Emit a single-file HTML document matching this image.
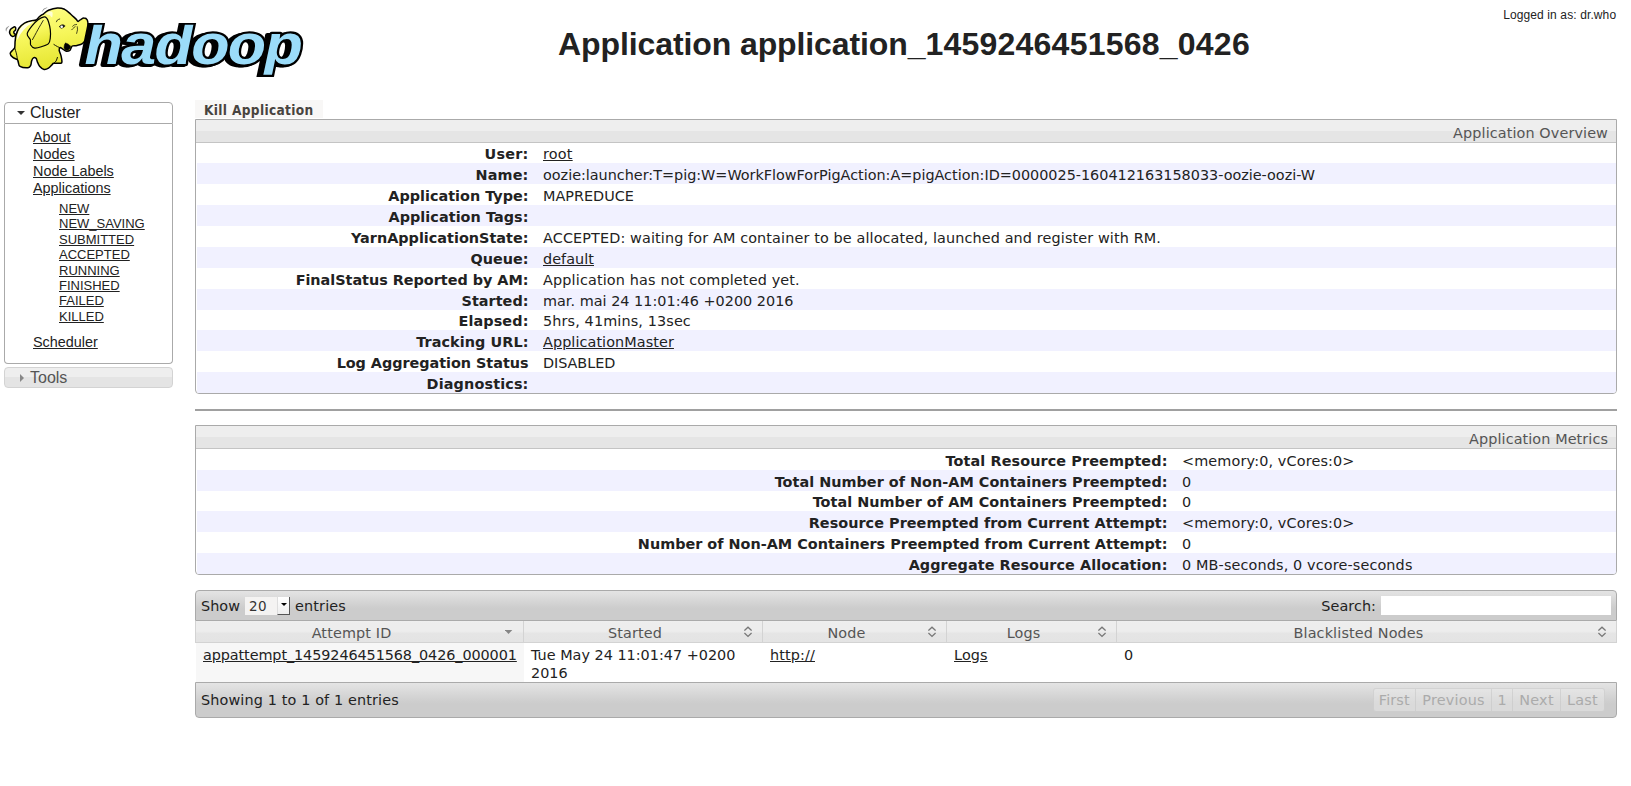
<!DOCTYPE html>
<html>
<head>
<meta charset="utf-8">
<title>Application application_1459246451568_0426</title>
<style>
* { margin: 0; padding: 0; border: 0; box-sizing: border-box; }
html, body { width: 1631px; height: 786px; background: #fff; overflow: hidden; }
body { font: 14.4px "DejaVu Sans", "Liberation Sans", sans-serif; color: #222; position: relative; }
a { color: #222; text-decoration: underline; }
.abs { position: absolute; }
#user { right: 14.8px; letter-spacing: 0.115px; top: 8px; font: 12px/14px "Liberation Sans", sans-serif; color: #222; }
#title { left: 195px; width: 1418px; top: 24px; text-align: center; font: bold 32px/40px "Liberation Sans", sans-serif; color: #222; white-space: nowrap; }
#logo { left: 0; top: 0; }

/* nav */
#nav { left: 4px; top: 102px; width: 169px; font-family: "Liberation Sans", sans-serif; }
#nav h3 { font-weight: normal; font-size: 16px; line-height: 18px; height: 22px; border: 1px solid #aaa; padding: 1px 0 0 25px; position: relative; color: #212121; background: #fff; }
#nav h3.open { border-radius: 4px 4px 0 0; }
#nav h3.closed { border-radius: 4px; background: linear-gradient(#eeeeee 0, #eeeeee 50%, #e4e4e4 50%, #e4e4e4 100%); border-color: #d3d3d3; color: #555; margin-top: 3px; height: 21px; padding-top: 1px; }
#nav .panel { border: 1px solid #aaa; border-top: 0; border-radius: 0 0 4px 4px; height: 240px; padding: 5px 0 0 28px; background: #fff; }
#nav .panel a { display: block; font-size: 14.4px; line-height: 17px; }
#nav .panel .sub { padding: 4px 0 10px 26px; }
#nav .panel .sub a { font-size: 13px; line-height: 15.4px; }
.tri-d { position: absolute; left: 12px; top: 8px; width: 0; height: 0; border-left: 4px solid transparent; border-right: 4px solid transparent; border-top: 4px solid #333; }
.tri-r { position: absolute; left: 15px; top: 6px; width: 0; height: 0; border-top: 4px solid transparent; border-bottom: 4px solid transparent; border-left: 4px solid #888; }

/* content */
#kill { left: 195px; top: 100px; width: 128px; height: 18px; background: #f8f7f6; font: bold 13.6px/20px "DejaVu Sans Condensed", "DejaVu Sans", sans-serif; color: #48443f; padding-left: 9px; letter-spacing: 0.33px; white-space: nowrap; }
.box { border: 1px solid #aaa; border-radius: 0 0 4px 4px; background: #fff; padding: 0 0 0 1px; overflow: hidden; }
.box .hd { height: 23px; margin: 0 0 0 -1px; border-bottom: 1px solid #c4c4c4; background: linear-gradient(#eeeeee 0, #eeeeee 50%, #e5e5e5 50%, #e5e5e5 100%); text-align: right; padding: 4px 8px 0 0; line-height: 18px; color: #555; }
.info .r { height: 21px; display: flex; white-space: nowrap; line-height: 17px; color: #222; }
.info .r.even { background: #f1f1ff; }
.info .r b { display: block; text-align: right; padding: 4px 6.5px 0 0; font-weight: bold; flex: none; }
.info .r span { display: block; padding: 4px 0 0 8px; }
#ov { left: 195px; top: 119px; width: 1422px; height: 275px; }
#ov b { width: 338px; }
#ov .r:nth-child(1), #ov .r:nth-child(9), #met .r:nth-child(3) { height: 20px; }
#ov .r:nth-child(1) > *, #ov .r:nth-child(9) > *, #met .r:nth-child(3) > * { padding-top: 3px; }
#hr { left: 195px; top: 409px; width: 1422px; height: 2px; background: #a0a0a0; }
#met { left: 195px; top: 425px; width: 1422px; height: 150px; }
#met b { width: 977px; }

/* datatable */
.bar { left: 195px; width: 1422px; border: 1px solid #aaa; background: linear-gradient(#e4e4e4 0, #dadada 25%, #cfcfcf 52%, #ccc 62%, #ccc 100%); color: #222; }
#bar1 { top: 590px; height: 31px; border-radius: 4px 4px 0 0; }
#bar2 { top: 682px; height: 36px; border-radius: 0 0 4px 4px; }
#thead { left: 195px; top: 621px; width: 1422px; height: 22px; border: 1px solid #d3d3d3; border-top: 0; background: linear-gradient(#efefef 0, #ededed 8%, #ededed 48%, #e5e5e5 60%, #e4e4e4 100%); color: #555; }
#thead div { position: absolute; top: 0; height: 21px; border-right: 1px solid #d3d3d3; text-align: center; line-height: 24px; padding-right: 16px; }
.sorticon { position: absolute; right: 10.5px; top: 5px; width: 8px; height: 12px; }
#sel { left: 49px; top: 6px; width: 45px; height: 18px; background: #f4f3f2; }
#sel span { position: absolute; left: 4px; top: 1px; font-size: 13.5px; line-height: 17px; color: #333; }
#sel i { position: absolute; right: 0; top: 0; width: 13px; height: 18px; background: linear-gradient(#fff, #eee); border-right: 1px solid #555; border-bottom: 1px solid #555; border-left: 1px solid #ddd; }
#sel i:after { content: ""; position: absolute; left: 3px; top: 6px; border-left: 3px solid transparent; border-right: 3px solid transparent; border-top: 3.5px solid #000; }
#search { left: 1185px; top: 5px; width: 230px; height: 19px; background: #fff; }
#row { left: 195px; top: 643px; width: 1422px; height: 39px; line-height: 18px; }
#pag { right: 11px; top: 5px; height: 24px; border: 1px solid rgba(190,190,190,.45); border-radius: 3px; background: rgba(240,240,240,.4); color: #ababab; white-space: nowrap; font-size: 0; }
#pag span { display: inline-block; height: 22px; line-height: 23px; font-size: 14.4px; text-align: center; border-right: 1px solid rgba(190,190,190,.45); }
</style>
</head>
<body>
<div id="logo" class="abs"><svg width="310" height="85" viewBox="0 0 310 85">
<defs><linearGradient id="yg" x1="0" y1="0" x2="0.25" y2="1"><stop offset="0" stop-color="#ffff8c"/><stop offset="0.55" stop-color="#f6f65a"/><stop offset="1" stop-color="#e6e632"/></linearGradient></defs>
<g stroke="#000" stroke-width="1.5" stroke-linejoin="round" stroke-linecap="round" fill="url(#yg)">
<path d="M16.0 34.7C15.7 35.2 13.5 36.7 12.5 36.5C11.4 36.3 10.2 34.5 9.8 33.4C9.4 32.3 9.7 30.8 10.2 29.8C10.8 28.9 12.1 28.1 12.9 27.6C13.7 27.1 14.7 26.6 15.1 27.0C15.6 27.3 15.8 29.1 15.6 29.8C15.4 30.6 14.0 30.9 13.8 31.6C13.6 32.3 14.1 33.3 14.5 33.8C14.9 34.4 16.4 34.3 16.0 34.7Z"/>
<path d="M43.6 13.8C45.1 12.8 46.2 11.2 48.5 10.2C50.8 9.3 54.8 8.2 57.4 8.0C60.1 7.9 62.3 8.3 64.6 9.3C66.8 10.4 68.9 12.6 70.8 14.2C72.7 15.9 74.9 18.0 76.1 19.1C77.3 20.3 77.3 21.3 78.1 21.4C78.8 21.4 79.6 20.1 80.6 19.6C81.6 19.0 83.0 18.0 84.1 18.1C85.3 18.1 86.6 18.7 87.3 20.0C87.9 21.4 88.1 24.0 88.1 26.3C88.2 28.5 88.1 31.2 87.7 33.4C87.3 35.6 86.8 37.9 85.9 39.6C85.0 41.3 83.8 42.7 82.4 43.6C80.9 44.6 78.7 45.0 77.0 45.4C75.4 45.8 73.5 45.5 72.6 45.9C71.6 46.2 71.7 46.9 71.2 47.6C70.8 48.4 70.7 49.7 69.9 50.3C69.1 50.9 67.4 51.3 66.3 51.2C65.2 51.0 64.3 50.0 63.2 49.4C62.2 48.8 60.8 47.5 60.1 47.6C59.4 47.8 59.1 49.0 59.2 50.3C59.4 51.6 60.5 53.9 61.0 55.6C61.4 57.4 61.9 59.7 61.9 61.0C61.9 62.3 62.3 62.8 61.0 63.2C59.7 63.6 55.4 63.0 53.9 63.2C52.4 63.4 53.0 63.7 52.1 64.6C51.2 65.4 49.9 67.3 48.5 68.1C47.2 68.9 45.6 69.7 44.1 69.4C42.6 69.2 40.7 67.6 39.6 66.3C38.5 65.1 38.0 63.2 37.4 61.9C36.8 60.5 36.7 59.0 36.1 58.3C35.4 57.7 34.1 57.4 33.4 57.9C32.6 58.3 32.0 59.7 31.6 61.0C31.2 62.3 31.3 64.3 30.7 65.4C30.1 66.6 29.8 67.5 28.0 67.7C26.3 67.8 21.7 67.3 20.0 66.3C18.4 65.4 18.7 63.0 18.2 61.9C17.8 60.8 18.2 60.4 17.4 59.7C16.5 58.9 14.1 58.5 12.9 57.4C11.7 56.4 10.2 54.7 10.2 53.4C10.2 52.2 12.2 50.8 12.9 49.9C13.6 48.9 14.3 49.0 14.7 47.6C15.1 46.2 14.9 43.5 15.1 41.4C15.4 39.3 15.4 37.4 16.0 35.2C16.7 32.9 17.7 30.0 19.1 28.0C20.5 26.0 22.6 24.3 24.5 23.1C26.4 22.0 28.8 21.4 30.7 20.9C32.6 20.4 34.6 20.8 36.1 20.0C37.5 19.3 38.4 17.5 39.6 16.5C40.9 15.4 42.1 14.8 43.6 13.8Z"/>
<path d="M44.1 16.9C42.6 17.2 39.9 18.5 37.8 20.0C35.8 21.6 33.4 24.0 31.6 26.3C29.8 28.6 27.4 31.6 27.2 33.8C26.9 36.1 29.7 37.8 30.3 39.6C30.9 41.5 30.0 43.6 30.7 45.0C31.5 46.4 32.9 47.8 34.7 48.1C36.5 48.4 39.1 47.5 41.4 46.7C43.7 46.0 47.0 45.1 48.5 43.6C50.0 42.1 50.0 40.1 50.3 37.8C50.6 35.5 50.6 32.5 50.3 29.8C50.0 27.2 49.1 23.7 48.5 21.8C47.9 19.9 47.5 19.1 46.7 18.2C46.0 17.4 45.6 16.6 44.1 16.9Z" stroke-width="1.2"/>
<path d="M65.4 43.2C66.5 42.8 69.7 44.9 70.3 45.9C71.0 46.8 70.1 48.2 69.4 49.0C68.8 49.7 67.2 50.5 66.3 50.3C65.4 50.2 64.3 49.3 64.1 48.1C64.0 46.9 64.4 43.6 65.4 43.2Z" fill="#000" stroke-width="0.6"/>
<path d="M59.7 26.3C59.9 25.7 61.4 24.7 62.3 24.7C63.2 24.6 64.8 25.3 65.0 25.8C65.1 26.3 63.9 27.2 63.2 27.6C62.5 28.0 61.6 28.4 61.0 28.2C60.4 28.0 59.4 26.9 59.7 26.3Z" fill="#1a1a1a" stroke-width="0.5"/>
<circle cx="61.7" cy="26.7" r="1.3" fill="#fff" stroke="none"/>
<path d="M53.9 44.5C54.5 44.9 56.4 46.0 57.4 46.6C58.5 47.1 59.8 47.6 60.3 47.8" fill="none" stroke-width="0.9"/>
<path d="M57.4 57.4C57.2 58.0 56.7 60.0 56.1 61.0C55.5 62.0 54.2 62.8 53.9 63.2" fill="none" stroke-width="0.9"/>
<path d="M14.7 47.6C15.0 48.7 16.0 51.9 16.5 53.9C16.9 55.9 17.4 58.7 17.5 59.7" fill="none" stroke-width="0.9"/>
<path d="M72.6 26.3C72.9 26.0 73.7 25.2 74.3 24.9C75.0 24.6 76.2 24.6 76.6 24.5" fill="none" stroke-width="0.7"/>
<path d="M71.7 29.8C72.0 29.5 73.3 28.1 73.9 27.6C74.5 27.1 75.0 26.9 75.2 26.7" fill="none" stroke-width="0.7"/>
<path d="M76.6 33.4C76.7 32.8 77.4 30.9 77.5 29.8C77.6 28.7 77.2 27.2 77.2 26.7" fill="none" stroke-width="0.7"/>
<path d="M56.5 21.8C56.7 21.5 56.9 20.5 57.4 20.0C57.9 19.6 59.3 19.1 59.7 19.0" fill="none" stroke-width="0.7"/>
<path d="M32.5 39.6C33.4 38.0 36.1 33.0 37.8 29.8C39.6 26.6 42.3 22.0 43.2 20.5" fill="none" stroke-width="0.8"/>
</g>
<path d="M17.4 39.6C16.9 39.5 17.5 34.6 18.2 32.5C19.0 30.3 20.3 28.3 21.8 26.7C23.3 25.1 25.2 24.0 27.2 23.1C29.1 22.3 33.5 21.1 33.4 21.8C33.2 22.5 28.3 25.2 26.3 27.2C24.2 29.1 22.4 31.3 20.9 33.4C19.4 35.5 17.8 39.8 17.4 39.6Z" fill="#fff" opacity=".85"/>
<path d="M45.9 13.8C46.0 13.2 49.2 11.8 50.3 11.6C51.4 11.3 52.2 11.5 52.5 12.5C52.8 13.4 52.6 16.9 52.1 17.4C51.6 17.8 50.5 15.7 49.4 15.1C48.4 14.5 45.7 14.4 45.9 13.8Z" fill="#fff" opacity=".7"/>
<path d="M41.8 12.0C41.8 11.9 43.1 9.2 44.1 8.5C45.0 7.7 47.6 7.3 47.6 7.4C47.7 7.5 45.5 8.4 44.5 9.2C43.6 9.9 41.9 12.1 41.8 12.0Z" fill="#888" stroke="none"/>
<path d="M6.2 31.6C6.0 31.5 5.3 29.5 5.8 28.5C6.3 27.5 9.1 25.7 9.3 25.8C9.6 25.9 7.6 28.0 7.1 28.9C6.6 29.9 6.4 31.7 6.2 31.6Z" fill="#999" stroke="none"/>
<defs><clipPath id="ck"><rect x="-20" y="-41.3" width="260" height="54"/></clipPath><clipPath id="cb"><rect x="-20" y="-39.5" width="260" height="50"/></clipPath></defs>
<g transform="translate(84.5,64.2) scale(1.082,1)" font-family="Liberation Sans, sans-serif" font-weight="bold" font-style="italic" font-size="58" letter-spacing="-1.5">
<g clip-path="url(#ck)">
<text x="-4.2" y="0.8" fill="#000" stroke="#000" stroke-width="4" stroke-linejoin="round">hadoop</text>
<text x="-2" y="0.4" fill="#000" stroke="#000" stroke-width="4" stroke-linejoin="round">hadoop</text>
<text x="0" y="0" fill="#000" stroke="#000" stroke-width="4.4" stroke-linejoin="round">hadoop</text>
</g>
<text clip-path="url(#cb)" x="0" y="0" fill="#9bdcf9">hadoop</text>
</g>
</svg></div>
<div id="user" class="abs">Logged in as: dr.who</div>
<div id="title" class="abs"><span style="letter-spacing:-0.104px">Application application_</span><span style="letter-spacing:0.23px">1459246451568_0426</span></div>

<div id="nav" class="abs">
  <h3 class="open"><span class="tri-d"></span>Cluster</h3>
  <div class="panel">
    <a>About</a>
    <a>Nodes</a>
    <a>Node Labels</a>
    <a>Applications</a>
    <div class="sub">
      <a>NEW</a>
      <a>NEW_SAVING</a>
      <a>SUBMITTED</a>
      <a>ACCEPTED</a>
      <a>RUNNING</a>
      <a>FINISHED</a>
      <a>FAILED</a>
      <a>KILLED</a>
    </div>
    <a>Scheduler</a>
  </div>
  <h3 class="closed"><span class="tri-r"></span>Tools</h3>
</div>

<div id="kill" class="abs">Kill Application</div>

<div id="ov" class="abs box">
  <div class="hd" style="letter-spacing:0.108px">Application Overview</div>
  <div class="info">
    <div class="r"><b style="letter-spacing:0.222px">User:</b><span><a style="letter-spacing:0.203px">root</a></span></div>
    <div class="r even"><b style="letter-spacing:0.140px">Name:</b><span style="letter-spacing:-0.008px">oozie:launcher:T=pig:W=WorkFlowForPigAction:A=pigAction:ID=0000025-160412163158033-oozie-oozi-W</span></div>
    <div class="r"><b style="letter-spacing:0.006px">Application Type:</b><span style="letter-spacing:0.017px">MAPREDUCE</span></div>
    <div class="r even"><b style="letter-spacing:0.056px">Application Tags:</b><span></span></div>
    <div class="r"><b style="letter-spacing:0.013px">YarnApplicationState:</b><span style="letter-spacing:0.122px">ACCEPTED: waiting for AM container to be allocated, launched and register with RM.</span></div>
    <div class="r even"><b style="letter-spacing:-0.006px">Queue:</b><span><a style="letter-spacing:0.048px">default</a></span></div>
    <div class="r"><b style="letter-spacing:-0.016px">FinalStatus Reported by AM:</b><span style="letter-spacing:0.153px">Application has not completed yet.</span></div>
    <div class="r even"><b style="letter-spacing:0.026px">Started:</b><span style="letter-spacing:0.018px">mar. mai 24 11:01:46 +0200 2016</span></div>
    <div class="r"><b style="letter-spacing:0.100px">Elapsed:</b><span style="letter-spacing:0.126px">5hrs, 41mins, 13sec</span></div>
    <div class="r even"><b style="letter-spacing:0.079px">Tracking URL:</b><span><a style="letter-spacing:0.080px">ApplicationMaster</a></span></div>
    <div class="r"><b style="letter-spacing:-0.032px">Log Aggregation Status</b><span style="letter-spacing:-0.052px">DISABLED</span></div>
    <div class="r even"><b style="letter-spacing:0.140px">Diagnostics:</b><span></span></div>
  </div>
</div>

<div id="hr" class="abs"></div>

<div id="met" class="abs box">
  <div class="hd" style="letter-spacing:0.089px">Application Metrics</div>
  <div class="info">
    <div class="r"><b style="letter-spacing:0.101px">Total Resource Preempted:</b><span style="letter-spacing:0.143px">&lt;memory:0, vCores:0&gt;</span></div>
    <div class="r even"><b style="letter-spacing:0.028px">Total Number of Non-AM Containers Preempted:</b><span style="letter-spacing:-0.162px">0</span></div>
    <div class="r"><b style="letter-spacing:0.035px">Total Number of AM Containers Preempted:</b><span style="letter-spacing:-0.162px">0</span></div>
    <div class="r even"><b style="letter-spacing:0.042px">Resource Preempted from Current Attempt:</b><span style="letter-spacing:0.143px">&lt;memory:0, vCores:0&gt;</span></div>
    <div class="r"><b style="letter-spacing:0.007px">Number of Non-AM Containers Preempted from Current Attempt:</b><span style="letter-spacing:-0.162px">0</span></div>
    <div class="r even"><b style="letter-spacing:0.060px">Aggregate Resource Allocation:</b><span style="letter-spacing:0.135px">0 MB-seconds, 0 vcore-seconds</span></div>
  </div>
</div>

<div id="bar1" class="abs bar">
  <span class="abs" style="letter-spacing:0.036px;left:5px;top:6px;line-height:18px">Show</span>
  <div id="sel" class="abs"><span style="letter-spacing:0.411px">20</span><i></i></div>
  <span class="abs" style="letter-spacing:0.155px;left:99px;top:6px;line-height:18px">entries</span>
  <span class="abs" style="letter-spacing:0.051px;right:240px;top:6px;line-height:18px">Search:</span>
  <div id="search" class="abs"></div>
</div>
<div id="thead" class="abs">
  <div style="letter-spacing:0.127px;left:0;width:328px">Attempt ID<svg class="sorticon" viewBox="0 0 8 12"><path d="M-0.3 4h7.6l-3.8 4z" fill="#858585"/></svg></div>
  <div style="letter-spacing:0.118px;left:328px;width:239px">Started<svg class="sorticon" viewBox="0 0 8 12"><path d="M0.4 4.6l3.6-3.4 3.6 3.4M0.4 7l3.6 3.4 3.6-3.4" fill="none" stroke="#777" stroke-width="1.35"/></svg></div>
  <div style="letter-spacing:0.104px;left:567px;width:184px">Node<svg class="sorticon" viewBox="0 0 8 12"><path d="M0.4 4.6l3.6-3.4 3.6 3.4M0.4 7l3.6 3.4 3.6-3.4" fill="none" stroke="#777" stroke-width="1.35"/></svg></div>
  <div style="letter-spacing:0.131px;left:751px;width:170px">Logs<svg class="sorticon" viewBox="0 0 8 12"><path d="M0.4 4.6l3.6-3.4 3.6 3.4M0.4 7l3.6 3.4 3.6-3.4" fill="none" stroke="#777" stroke-width="1.35"/></svg></div>
  <div style="letter-spacing:0.131px;left:921px;width:499px;border-right:0">Blacklisted Nodes<svg class="sorticon" viewBox="0 0 8 12"><path d="M0.4 4.6l3.6-3.4 3.6 3.4M0.4 7l3.6 3.4 3.6-3.4" fill="none" stroke="#777" stroke-width="1.35"/></svg></div>
</div>
<div id="row" class="abs">
  <div class="abs" style="left:1px;top:0;width:328px;height:39px;background:#f7f7f7"></div>
  <span class="abs" style="left:8px;top:3px"><a style="letter-spacing:-0.089px">appattempt_1459246451568_0426_000001</a></span>
  <span class="abs" style="letter-spacing:0.007px;left:336px;top:3px;width:225px">Tue May 24 11:01:47 +0200 2016</span>
  <span class="abs" style="left:575px;top:3px"><a style="letter-spacing:0.127px">http://</a></span>
  <span class="abs" style="left:759px;top:3px"><a style="letter-spacing:0.131px">Logs</a></span>
  <span class="abs" style="letter-spacing:-0.162px;left:929px;top:3px">0</span>
</div>
<div id="bar2" class="abs bar">
  <span class="abs" style="letter-spacing:0.136px;left:5px;top:8px;line-height:18px">Showing 1 to 1 of 1 entries</span>
  <div id="pag" class="abs"><span style="letter-spacing:0.130px;width:42.5px">First</span><span style="letter-spacing:0.197px;width:76px">Previous</span><span style="letter-spacing:-0.162px;width:21px">1</span><span style="letter-spacing:0.300px;width:48px">Next</span><span style="letter-spacing:0.251px;width:43px;border-right:0">Last</span></div>
</div>
</body>
</html>
